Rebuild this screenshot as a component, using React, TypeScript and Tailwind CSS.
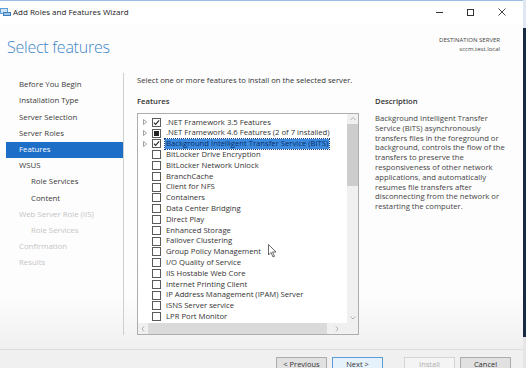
import React from 'react'

const NAV = [
  { label: 'Before You Begin', indent: false, state: 'normal' },
  { label: 'Installation Type', indent: false, state: 'normal' },
  { label: 'Server Selection', indent: false, state: 'normal' },
  { label: 'Server Roles', indent: false, state: 'normal' },
  { label: 'Features', indent: false, state: 'active' },
  { label: 'WSUS', indent: false, state: 'normal' },
  { label: 'Role Services', indent: true, state: 'normal' },
  { label: 'Content', indent: true, state: 'normal' },
  { label: 'Web Server Role (IIS)', indent: false, state: 'disabled' },
  { label: 'Role Services', indent: true, state: 'disabled' },
  { label: 'Confirmation', indent: false, state: 'disabled' },
  { label: 'Results', indent: false, state: 'disabled' },
]

type Feature = { name: string; check?: 'on' | 'partial'; expand?: boolean; selected?: boolean }

const FEATURES: Feature[] = [
  { name: '.NET Framework 3.5 Features', check: 'on', expand: true },
  { name: '.NET Framework 4.6 Features (2 of 7 installed)', check: 'partial', expand: true },
  { name: 'Background Intelligent Transfer Service (BITS)', check: 'on', expand: true, selected: true },
  { name: 'BitLocker Drive Encryption' },
  { name: 'BitLocker Network Unlock' },
  { name: 'BranchCache' },
  { name: 'Client for NFS' },
  { name: 'Containers' },
  { name: 'Data Center Bridging' },
  { name: 'Direct Play' },
  { name: 'Enhanced Storage' },
  { name: 'Failover Clustering' },
  { name: 'Group Policy Management' },
  { name: 'I/O Quality of Service' },
  { name: 'IIS Hostable Web Core' },
  { name: 'Internet Printing Client' },
  { name: 'IP Address Management (IPAM) Server' },
  { name: 'iSNS Server service' },
  { name: 'LPR Port Monitor' },
]

function CheckBox({ check }: { check?: 'on' | 'partial' }) {
  return (
    <span className="w-[9px] h-[9px] border border-[#5a5a5a] bg-white flex items-center justify-center shrink-0">
      {check === 'on' && (
        <svg width="7" height="7" viewBox="0 0 8 8" fill="none" stroke="#222" strokeWidth="1.2">
          <polyline points="1,4.2 3,6.2 7,1.5" />
        </svg>
      )}
      {check === 'partial' && <span className="w-[5px] h-[5px] bg-[#222]" />}
    </span>
  )
}

function Button({ children, kind }: { children: React.ReactNode; kind?: 'default' | 'disabled' }) {
  const cls =
    kind === 'default'
      ? 'border-[#5b9bd8] bg-[#e5f1fb] text-[#333]'
      : kind === 'disabled'
      ? 'border-[#d4d4d4] bg-[#f4f4f4] text-[#b0b0b0]'
      : 'border-[#acacac] bg-[#e1e1e1] text-[#333]'
  return (
    <div className={`w-[51px] h-[16px] border flex items-center justify-center text-[7.5px] leading-none ${cls}`}>
      {children}
    </div>
  )
}

export default function App() {
  return (
    <div
      className="w-[526px] h-[368px] overflow-hidden relative flex bg-white text-[#333]"
      style={{ fontFamily: '"Open Sans", "Noto Sans", sans-serif' }}
    >
      {/* Ventana */}
      <div className="w-[523px] h-full flex flex-col border-t border-[#9cc0e6]">
        {/* Barra de título */}
        <div className="h-[22px] flex items-center bg-white">
          <svg width="11" height="10" viewBox="0 0 11 10" className="mr-[2px]">
            <rect x="0" y="1" width="8" height="6" fill="#5f9fd8" />
            <rect x="1" y="2" width="6" height="4" fill="#cfe4f6" />
            <rect x="3" y="5" width="8" height="4" fill="#3d7fbf" />
            <rect x="4" y="6" width="6" height="2" fill="#9cc7ec" />
          </svg>
          <span className="text-[8px] text-[#222]">Add Roles and Features Wizard</span>
          <div className="ml-auto flex items-center h-full">
            <div className="w-[31px] flex justify-center">
              <span className="w-[7px] h-[1px] bg-[#333]" />
            </div>
            <div className="w-[31px] flex justify-center">
              <span className="w-[7px] h-[7px] border border-[#333]" />
            </div>
            <div className="w-[31px] flex justify-center mr-[6px]">
              <svg width="8" height="8" viewBox="0 0 8 8" stroke="#333" strokeWidth="0.9">
                <line x1="0.5" y1="0.5" x2="7.5" y2="7.5" />
                <line x1="7.5" y1="0.5" x2="0.5" y2="7.5" />
              </svg>
            </div>
          </div>
        </div>

        {/* Encabezado */}
        <div className="h-[50px] flex items-center justify-between pl-[7px] pr-[23px] bg-[#fdfdfd]">
          <h1 className="text-[16px] font-light text-[#3f86c6] tracking-[-0.25px] pb-[2px]">Select features</h1>
          <div className="text-right text-[6px] leading-[9px] text-[#444] -mt-[6px]">
            <div>DESTINATION SERVER</div>
            <div>sccm.test.local</div>
          </div>
        </div>

        {/* Cuerpo */}
        <div className="flex-1 flex pb-[14px] bg-linear-to-b from-[#fdfdfd] from-80% to-[#f0f0f0]">
          {/* Navegación */}
          <div className="w-[124px] border-r border-[#cfcfcf] pt-[4px] pl-[6px]">
            {NAV.map((n, i) => (
              <div
                key={i}
                className={`h-[16.2px] flex items-center text-[7.8px] w-[117px] whitespace-nowrap ${
                  n.indent ? 'pl-[25px]' : 'pl-[13px]'
                } ${
                  n.state === 'active'
                    ? 'bg-[#1c6ec6] text-white'
                    : n.state === 'disabled'
                    ? 'text-[#c4c4c4]'
                    : 'text-[#3a3a3a]'
                }`}
              >
                {n.label}
              </div>
            ))}
          </div>

          {/* Contenido */}
          <div className="flex-1 pl-[13px] pt-[3px] flex flex-col">
            <div className="h-[10px] flex items-center text-[7.7px] text-[#333] whitespace-nowrap">
              Select one or more features to install on the selected server.
            </div>
            <div className="flex flex-1 mt-[10px]">
              {/* Columna de funciones */}
              <div className="w-[222px] flex flex-col">
                <div className="h-[12px] flex items-center text-[7.7px] font-semibold text-[#333]">Features</div>
                <div className="flex-1 mt-[5px] border border-[#adadad] bg-white flex flex-col">
                  <div className="flex-1 flex min-h-0">
                    <div className="flex-1 pt-[3px] overflow-hidden">
                      {FEATURES.map((f, i) => (
                        <div key={i} className="h-[10.8px] flex items-center">
                          <span className="w-[14px] flex justify-center">
                            {f.expand && (
                              <svg width="4" height="6" viewBox="0 0 4 6" fill="none" stroke="#8a8a8a" strokeWidth="0.8">
                                <polygon points="0.5,0.5 3.5,3 0.5,5.5" />
                              </svg>
                            )}
                          </span>
                          <CheckBox check={f.check} />
                          <span
                            className={`ml-[4px] text-[7.7px] leading-[9.5px] whitespace-nowrap px-[1px] ${
                              f.selected
                                ? 'bg-[#3b8ade] text-[#0a2d68] outline outline-dotted outline-[#1a3f80]'
                                : 'text-[#333]'
                            }`}
                          >
                            {f.name}
                          </span>
                        </div>
                      ))}
                    </div>
                    {/* Barra vertical */}
                    <div className="w-[11px] bg-[#f0f0f0] flex flex-col items-center">
                      <svg width="6" height="10" viewBox="0 0 6 10" fill="none" stroke="#a0a0a0" strokeWidth="0.8">
                        <polyline points="0.5,6 3,3.5 5.5,6" />
                      </svg>
                      <div className="w-[11px] h-[62px] bg-[#cdcdcd]" />
                      <div className="flex-1" />
                      <svg width="6" height="4" viewBox="0 0 6 4" fill="none" stroke="#a0a0a0" strokeWidth="0.8" className="mb-[3px]">
                        <polyline points="0.5,0.5 3,3 5.5,0.5" />
                      </svg>
                    </div>
                  </div>
                  {/* Barra horizontal */}
                  <div className="h-[11px] flex items-center bg-[#f0f0f0]">
                    <svg width="10" height="6" viewBox="0 0 10 6" fill="none" stroke="#a0a0a0" strokeWidth="0.8">
                      <polyline points="6,0.5 4,3 6,5.5" />
                    </svg>
                    <div className="w-[179px] h-[11px] bg-[#dadada]" />
                    <div className="flex-1 flex justify-center">
                      <svg width="6" height="6" viewBox="0 0 6 6" fill="none" stroke="#a0a0a0" strokeWidth="0.8">
                        <polyline points="2,0.5 4,3 2,5.5" />
                      </svg>
                    </div>
                    <div className="w-[11px] h-[11px] bg-[#f0f0f0]" />
                  </div>
                </div>
              </div>

              {/* Descripción */}
              <div className="ml-[16px] w-[134px]">
                <div className="h-[12px] flex items-center text-[7.7px] font-semibold text-[#333]">Description</div>
                <p className="mt-[6px] text-[7.7px] leading-[9.8px] text-[#444]">
                  Background Intelligent Transfer Service (BITS) asynchronously transfers files in the foreground or
                  background, controls the flow of the transfers to preserve the responsiveness of other network
                  applications, and automatically resumes file transfers after disconnecting from the network or
                  restarting the computer.
                </p>
              </div>
            </div>
          </div>
        </div>

        {/* Pie */}
        <div className="h-[19px] border-t border-[#dcdcdc] bg-[#f0f0f0] flex justify-end pr-[12px] pt-[7px]">
          <div className="flex gap-[5px]">
            <Button>&lt; Previous</Button>
            <Button kind="default">Next &gt;</Button>
          </div>
          <div className="flex gap-[5px] ml-[21px]">
            <Button kind="disabled">Install</Button>
            <Button>Cancel</Button>
          </div>
        </div>
      </div>

      {/* Fondo del escritorio a la derecha */}
      <div className="w-[3px] h-full flex flex-col">
        <div className="h-[28px] bg-[#dfe8f2]" />
        <div className="flex-1 bg-[#1a2a45]" />
        <div className="h-[31px] bg-[#e6e6e6]" />
      </div>

      {/* Cursor del ratón */}
      <svg width="9" height="14" viewBox="0 0 9 14" className="absolute left-[268px] top-[244px]">
        <polygon points="0.5,0.5 0.5,11 3,8.5 5,13 6.5,12.3 4.6,8 8,8" fill="white" stroke="#444" strokeWidth="0.8" />
      </svg>
    </div>
  )
}
